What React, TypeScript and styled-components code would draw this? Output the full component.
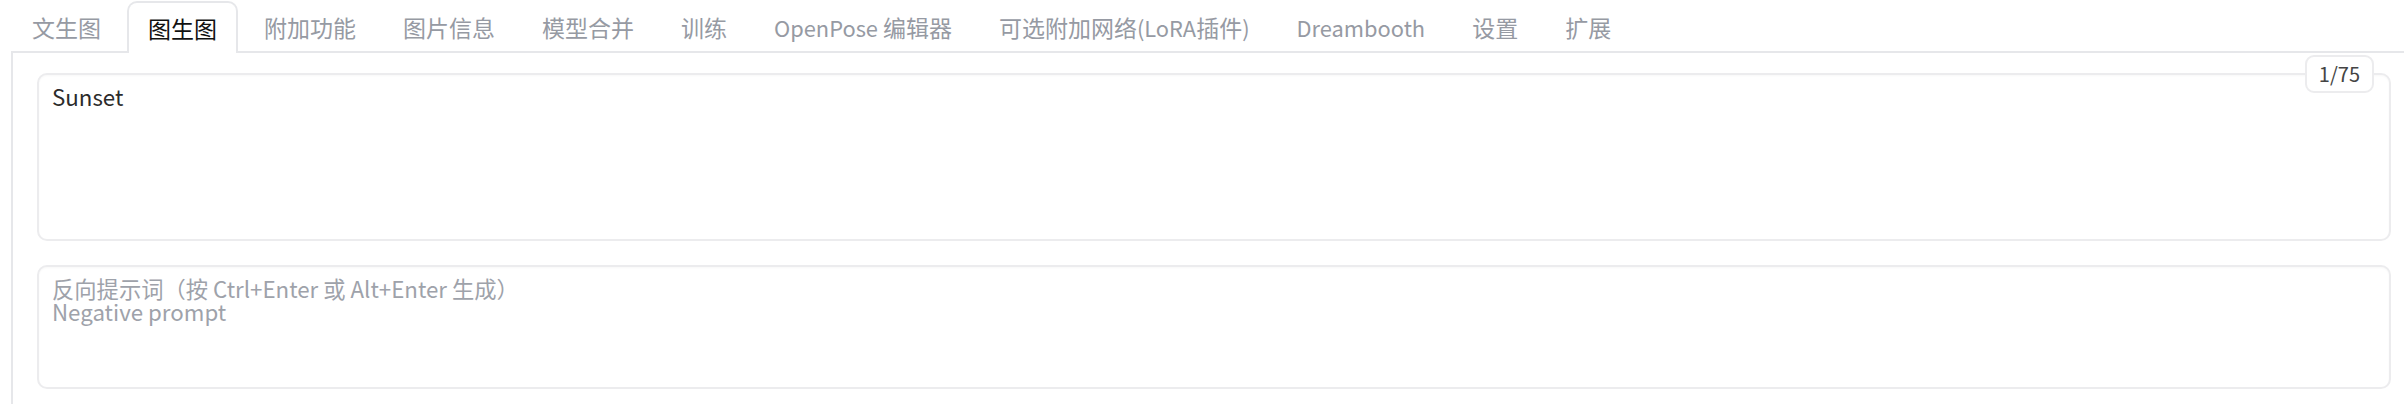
import React from 'react';
import styled, { createGlobalStyle } from 'styled-components';

const GlobalStyle = createGlobalStyle`
  html, body {
    margin: 0;
    padding: 0;
    background: #fff;
    overflow: hidden;
  }
  body {
    font-family: "Noto Sans CJK SC", "Noto Sans", sans-serif;
  }
`;

const Page = styled.div`
  padding: 1px 0 0 11px;
`;

const TabBar = styled.div`
  display: flex;
  gap: 5px;
  border-bottom: 2px solid #e6e7ea;
`;

const Tab = styled.div<{ $active?: boolean }>`
  display: flex;
  align-items: center;
  padding: 0 19px;
  font-size: 23px;
  color: ${(p) => (p.$active ? '#111' : '#969aa3')};
  border: 2px solid ${(p) => (p.$active ? '#e6e7ea' : 'transparent')};
  border-bottom: none;
  border-radius: 10px 10px 0 0;
  background: #fff;
  margin-bottom: ${(p) => (p.$active ? '-2px' : '0')};
  height: ${(p) => (p.$active ? '50px' : '48px')};
  white-space: pre;
`;

// latin runs render a touch narrower than the CJK glyphs in the tab labels
const Latin = styled.span`
  font-size: 0.95em;
`;

const Panel = styled.div`
  border-left: 2px solid #e6e7ea;
  padding: 20px 13px 30px 24px;
  display: flex;
  flex-direction: column;
  gap: 24px;
`;

const PromptBox = styled.div`
  position: relative;
`;

const PromptArea = styled.textarea<{ $rows: number }>`
  display: block;
  box-sizing: border-box;
  width: 100%;
  height: ${(p) => p.$rows}px;
  resize: none;
  border: 2px solid #ececee;
  border-radius: 10px;
  padding: 10px 13px;
  font-family: "Noto Sans CJK SC", "Noto Sans", sans-serif;
  font-size: 22.3px;
  line-height: 23px;
  color: #2b2b2b;
  background: #fff;
  box-shadow: inset 0 1px 2px rgba(0, 0, 0, 0.03);
  outline: none;

  &::placeholder {
    color: #9ea2aa;
  }
`;

const Counter = styled.div`
  position: absolute;
  top: -18px;
  right: 17px;
  padding: 4px 12px;
  font-size: 20px;
  line-height: 26px;
  color: #444;
  background: #fff;
  border: 2px solid #ececee;
  border-radius: 9px;
`;

const tabs = [
  '文生图',
  '图生图',
  '附加功能',
  '图片信息',
  '模型合并',
  '训练',
  'OpenPose 编辑器',
  '可选附加网络(LoRA插件)',
  'Dreambooth',
  '设置',
  '扩展',
];

const renderLabel = (label: string) =>
  label.split(/([A-Za-z() ]+)/).map((part, i) =>
    /[A-Za-z()]/.test(part) ? <Latin key={i}>{part}</Latin> : part
  );

export default function App() {
  return (
    <Page>
      <GlobalStyle />
      <TabBar>
        {tabs.map((t) => (
          <Tab key={t} $active={t === '图生图'}>
            {renderLabel(t)}
          </Tab>
        ))}
      </TabBar>
      <Panel>
        <PromptBox>
          <Counter>1/75</Counter>
          <PromptArea $rows={168} defaultValue="Sunset" />
        </PromptBox>
        <PromptBox>
          <PromptArea
            $rows={124}
            placeholder={'反向提示词（按 Ctrl+Enter 或 Alt+Enter 生成）\nNegative prompt'}
          />
        </PromptBox>
      </Panel>
    </Page>
  );
}
